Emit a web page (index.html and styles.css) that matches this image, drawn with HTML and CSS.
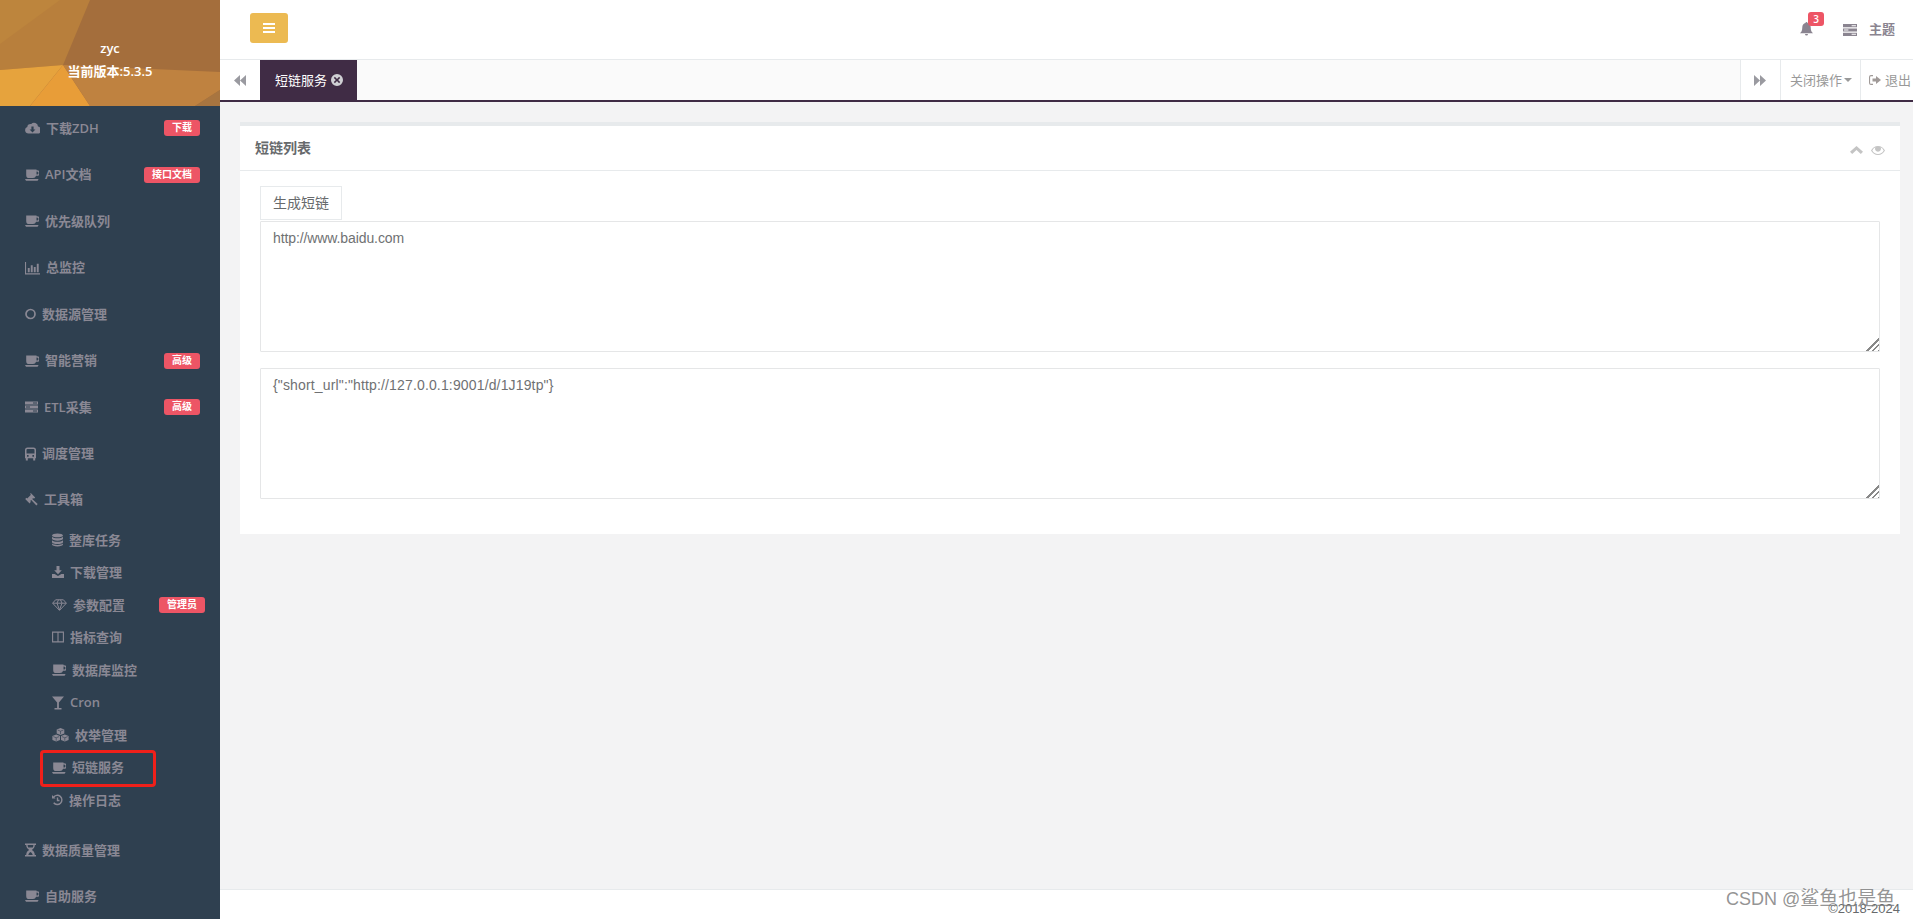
FILE: index.html
```html
<!DOCTYPE html>
<html lang="zh-CN">
<head>
<meta charset="UTF-8">
<meta name="viewport" content="width=device-width, initial-scale=1.0">
<title>短链服务</title>
<link rel="stylesheet" href="styles.css">
</head>
<body>
<svg class="sprite" xmlns="http://www.w3.org/2000/svg">
  <symbol id="i-cloud" viewBox="0 0 15 12"><path fill-rule="evenodd" d="M3.4 11.5A3.3 3.3 0 0 1 2.3 5.1 3.2 3.2 0 0 1 6.2 2 4 4 0 0 1 13 4.6a3.5 3.5 0 0 1-1.2 6.9zM6.4 4.5v3H4.6l2.9 3 2.9-3H8.6v-3z"/></symbol>
  <symbol id="i-coffee" viewBox="0 0 14 13"><path fill-rule="evenodd" d="M1.2 1h10.3v.8h.6a2.7 2.7 0 0 1 0 5.4h-1A3.3 3.3 0 0 1 8 9.6H4.4a3.2 3.2 0 0 1-3.2-3.2zM11.5 3v3h.5a1.5 1.5 0 0 0 0-3zM0 10.6h13.6l-1 1.6H1z"/></symbol>
  <symbol id="i-chart" viewBox="0 0 14 12"><path d="M0 .5h1v10.3h13V12H0zM2.6 6h1.8v4H2.600zM5.400 3.400h1.800v6.600H5.400zM8.200 5h1.800v5H8.200zM11 2h1.800v8H11z"/></symbol>
  <symbol id="i-ring" viewBox="0 0 11 11"><circle cx="5.500" cy="5.500" r="4.500" fill="none" stroke="currentColor" stroke-width="1.700"/></symbol>
  <symbol id="i-server" viewBox="0 0 13 11"><path fill-rule="evenodd" d="M0 0h13v3H0zM8 1v1h4V1zM0 4h13v3H0zM1 5v1h4V5zM0 8h13v3H0zM8 9v1h4V9z"/></symbol>
  <symbol id="i-bus" viewBox="0 0 11 13"><path fill-rule="evenodd" d="M2.500 0h6A2.500 2.500 0 0 1 11 2.500v8.300h-.8V13H8.200v-2.200H2.800V13H.8v-2.200H0V2.500A2.500 2.500 0 0 1 2.500 0zM1.500 2.500v3.400h8V2.500a1 1 0 0 0-1-1h-6a1 1 0 0 0-1 1zM2 7.400v1.800h1.600V7.400zM7.400 7.400v1.800H9V7.400z"/></symbol>
  <symbol id="i-gavel" viewBox="0 0 13 13"><path d="M5.800.6l4.400 4.400-1.300 1.300-.7-.7-1 1 5.500 5-1.300 1.300-5.200-5.400-1 1 .7.700L4.600 11 .2 6.600l1.300-1.300.7.7L6 2.200 5.100 1.400z"/></symbol>
  <symbol id="i-db" viewBox="0 0 11 13"><path d="M5.500 0C8.500 0 11 .8 11 1.900S8.500 3.800 5.500 3.800 0 3 0 1.900 2.500 0 5.500 0zM0 3.300c1 1 3.200 1.500 5.500 1.500s4.500-.5 5.500-1.500v2c0 1-2.500 1.900-5.500 1.900S0 6.300 0 5.300zM0 6.700c1 1 3.200 1.500 5.500 1.500s4.500-.5 5.500-1.500v2c0 1-2.500 1.900-5.500 1.900S0 9.700 0 8.700zM0 10.100c1 1 3.200 1.400 5.500 1.400s4.500-.4 5.500-1.400v1C11 12.200 8.500 13 5.500 13S0 12.200 0 11.100z"/></symbol>
  <symbol id="i-down" viewBox="0 0 12 12"><path d="M4.500 0h3v4.300h2.300L6 8.300 2.200 4.300h2.300zM0 8h2.600L6 10l3.400-2H12v4H0z"/></symbol>
  <symbol id="i-gem" viewBox="0 0 15 12"><path fill="none" stroke="currentColor" d="M3.600.8h7.800l3 3.400-6.900 7.200L.6 4.200zM.8 4.200h13.400M5 4.200L7.500 11l2.500-6.800M5 4.200L6.500.8M10 4.200L8.500.8"/></symbol>
  <symbol id="i-cols" viewBox="0 0 12 11"><path fill="none" stroke="currentColor" stroke-width="1.100" d="M.6.6h10.800v9.800H.6zM6 .6v9.800"/></symbol>
  <symbol id="i-glass" viewBox="0 0 12 13"><path d="M0 0h12L6.900 6v5.500h2.600V13H2.500v-1.500h2.600V6z"/></symbol>
  <symbol id="i-cubes" viewBox="0 0 17 14"><path d="M8.500 0l3.800 1.500v4L8.500 7 4.700 5.500v-4zM4.200 6.600L8 8.100v4l-3.800 1.500L.400 12.100v-4zM12.800 6.600l3.800 1.500v4l-3.800 1.500L9 12.100v-4z"/><path fill="none" stroke="#2f4050" stroke-width=".6" d="M5.600 2l2.900 1.200L11.400 2M8.500 3.200v3M1.300 8.600l2.900 1.200 2.900-1.200M4.200 9.800v3M9.900 8.600l2.900 1.200 2.900-1.200M12.800 9.800v3"/></symbol>
  <symbol id="i-hist" viewBox="0 0 11 11"><path fill="none" stroke="currentColor" stroke-width="1.400" d="M1.500 2.800A4.600 4.600 0 1 1 1.700 8.300M5.500 3v3h2"/><path d="M0 .5l3.600 3.600H0z"/></symbol>
  <symbol id="i-sand" viewBox="0 0 11 13"><path d="M0 0h11v1.600H9.800c0 2.500-1.400 4-3 4.900 1.600.9 3 2.400 3 4.900H11V13H0v-1.600h1.200c0-2.500 1.400-4 3-4.900-1.600-.9-3-2.400-3-4.900H0zM2.600 1.600c0 1 .2 1.800.6 2.500h4.600c.4-.7.600-1.500.6-2.500zM3.300 11.400h4.400c-.3-1.500-1.100-2.400-2.200-3-1.100.6-1.900 1.500-2.200 3z"/></symbol>
  <symbol id="i-bell" viewBox="0 0 13 14"><path d="M6.500 0a1 1 0 0 1 1 1.100c2 .4 3.200 2 3.200 4.100 0 3.600 1 4.800 2.300 6H0c1.300-1.200 2.300-2.400 2.300-6 0-2.100 1.200-3.700 3.200-4.100a1 1 0 0 1 1-1.100zM5 12h3a1.500 1.500 0 0 1-3 0z"/></symbol>
  <symbol id="i-back" viewBox="0 0 12 11"><path d="M6 0v11L0 5.500zM12 0v11L6 5.500z"/></symbol>
  <symbol id="i-fwd" viewBox="0 0 12 11"><path d="M0 0v11l6-5.500zM6 0v11l6-5.500z"/></symbol>
  <symbol id="i-x" viewBox="0 0 12 12"><path fill-rule="evenodd" d="M6 0a6 6 0 1 1 0 12A6 6 0 0 1 6 0zM3.900 2.800L2.800 3.900 4.900 6 2.800 8.100l1.100 1.100L6 7.100l2.100 2.100 1.100-1.100L7.100 6l2.100-2.100-1.100-1.100L6 4.900z"/></symbol>
  <symbol id="i-out" viewBox="0 0 12 10"><path d="M4 0v1.200H2a.9.9 0 0 0-.9.9v5.800c0 .5.400.9.900.9h2V10H2a2 2 0 0 1-2-2V2a2 2 0 0 1 2-2z"/><path d="M7 1l5 4-5 4V6.500H3.500v-3H7z"/></symbol>
  <symbol id="i-up" viewBox="0 0 13 8"><path d="M6.500 0L13 5.800 10.800 8 6.500 4 2.200 8 0 5.800z"/></symbol>
  <symbol id="i-eye" viewBox="0 0 14 9"><path fill-rule="evenodd" d="M7 0c3 0 5.600 1.800 7 4.500C12.600 7.200 10 9 7 9S1.400 7.200 0 4.500C1.400 1.800 4 0 7 0zM4.400 1.300A6.800 6.800 0 0 0 1.300 4.500 6.300 6.300 0 0 0 7 7.900a6.300 6.300 0 0 0 5.700-3.400 6.800 6.800 0 0 0-3.100-3.200 3 3 0 1 1-5.200 0z"/></symbol>
</svg>

<div class="wrapper">
  <nav class="sidebar">
    <div class="profile">
      <svg class="profile-bg" viewBox="0 0 220 106" preserveAspectRatio="none">
        <rect width="220" height="106" fill="#a46e3c"/>
        <polygon points="0,0 90,0 63,65 0,70" fill="#b87f3c"/>
        <polygon points="0,0 60,0 0,44" fill="#bd853d"/>
        <polygon points="0,70 63,65 30,106 0,106" fill="#e6a33d"/>
        <polygon points="63,65 90,106 30,106" fill="#e89d38"/>
        <polygon points="63,65 220,72 220,90 195,106 90,106" fill="#bf8240"/>
        <polygon points="195,106 220,90 220,106" fill="#a87540"/>
      </svg>
      <strong class="profile-name">zyc</strong>
      <strong class="profile-ver">当前版本:5.3.5</strong>
    </div>
    <ul class="menu">
      <li><a><svg class="ic w15"><use href="#i-cloud"/></svg>下载ZDH<span class="tag">下载</span></a></li>
      <li><a><svg class="ic w14"><use href="#i-coffee"/></svg>API文档<span class="tag">接口文档</span></a></li>
      <li><a><svg class="ic w14"><use href="#i-coffee"/></svg>优先级队列</a></li>
      <li><a><svg class="ic w15"><use href="#i-chart"/></svg>总监控</a></li>
      <li><a><svg class="ic w11"><use href="#i-ring"/></svg>数据源管理</a></li>
      <li><a><svg class="ic w14"><use href="#i-coffee"/></svg>智能营销<span class="tag">高级</span></a></li>
      <li><a><svg class="ic w13"><use href="#i-server"/></svg>ETL采集<span class="tag">高级</span></a></li>
      <li><a><svg class="ic w11"><use href="#i-bus"/></svg>调度管理</a></li>
      <li>
        <a class="menu-tools"><svg class="ic w13"><use href="#i-gavel"/></svg>工具箱</a>
        <ul class="submenu">
          <li><a><svg class="ic w11"><use href="#i-db"/></svg>整库任务</a></li>
          <li><a><svg class="ic w12"><use href="#i-down"/></svg>下载管理</a></li>
          <li><a><svg class="ic w15"><use href="#i-gem"/></svg>参数配置<span class="tag">管理员</span></a></li>
          <li><a><svg class="ic w12"><use href="#i-cols"/></svg>指标查询</a></li>
          <li><a><svg class="ic w14"><use href="#i-coffee"/></svg>数据库监控</a></li>
          <li><a><svg class="ic w12"><use href="#i-glass"/></svg>Cron</a></li>
          <li><a><svg class="ic w17"><use href="#i-cubes"/></svg>枚举管理</a></li>
          <li><a><svg class="ic w14"><use href="#i-coffee"/></svg>短链服务</a><span class="mark"></span></li>
          <li><a><svg class="ic w11"><use href="#i-hist"/></svg>操作日志</a></li>
        </ul>
      </li>
      <li><a><svg class="ic w11"><use href="#i-sand"/></svg>数据质量管理</a></li>
      <li><a><svg class="ic w14"><use href="#i-coffee"/></svg>自助服务</a></li>
    </ul>
  </nav>

  <div class="main">
    <header class="topbar">
      <button class="menu-btn"><span></span><span></span><span></span></button>
      <div class="top-right">
        <a class="bell"><svg class="ic-bell"><use href="#i-bell"/></svg><span class="bell-count">3</span></a>
        <a class="theme"><svg class="ic w14 theme-ic"><use href="#i-server"/></svg>主题</a>
      </div>
    </header>

    <div class="tabs">
      <button class="tab-arrow"><svg class="ic-arrow"><use href="#i-back"/></svg></button>
      <a class="tab-active">短链服务<svg class="ic-close"><use href="#i-x"/></svg></a>
      <div class="tab-tools">
        <button class="tab-arrow tool-next"><svg class="ic-arrow"><use href="#i-fwd"/></svg></button>
        <a class="tool-close">关闭操作<span class="caret"></span></a>
        <a class="tool-exit"><svg class="ic-out"><use href="#i-out"/></svg>退出</a>
      </div>
    </div>

    <main class="content">
      <section class="box">
        <div class="box-title">
          <h5>短链列表</h5>
          <div class="box-tools">
            <svg class="ic-up"><use href="#i-up"/></svg>
            <svg class="ic-eye"><use href="#i-eye"/></svg>
          </div>
        </div>
        <div class="box-body">
          <button class="gen-btn">生成短链</button>
          <textarea class="field">http://www.baidu.com</textarea>
          <textarea class="field field-result">{"short_url":"http://127.0.0.1:9001/d/1J19tp"}</textarea>
        </div>
      </section>
    </main>

    <footer class="footer">©2018-2024</footer>
  </div>
</div>
<div class="watermark">CSDN @<span class="watermark-name">鲨鱼也是鱼</span></div>
</body>
</html>
```

FILE: styles.css
```css
* {
  box-sizing: border-box;
}
html, body {
  height: 100%;
}
body {
  margin: 0;
  overflow: hidden;
  font-family: "Open Sans", "Noto Sans CJK SC", sans-serif;
  font-size: 13px;
  line-height: 18.57px;
  color: #676a6c;
  background-color: #f3f3f4;
}
ul {
  list-style: none;
  margin: 0;
  padding: 0;
}
button {
  font-family: inherit;
  border: none;
  padding: 0;
}
.sprite {
  display: none;
}
.wrapper {
  display: flex;
  height: 100vh;
}

/* sidebar */
.sidebar {
  width: 220px;
  flex-shrink: 0;
  height: 100vh;
  overflow: hidden;
  background-color: #2f4050;
}
.profile {
  position: relative;
  height: 106px;
  display: flex;
  flex-direction: column;
  align-items: center;
  padding-top: 39px;
  color: #fff;
}
.profile-bg {
  position: absolute;
  left: 0;
  top: 0;
  width: 100%;
  height: 100%;
}
.profile strong {
  position: relative;
  font-weight: 600;
}
.profile-ver {
  margin-top: 4px;
}
.menu > li > a {
  display: flex;
  align-items: center;
  height: 46.5px;
  padding: 0 20px 2px 25px;
  font-weight: 600;
  color: #8a8894;
}
.menu > li > a.menu-tools {
  padding-bottom: 4px;
}
.submenu {
  padding-bottom: 10px;
}
.submenu li {
  position: relative;
}
.submenu a {
  display: flex;
  align-items: center;
  height: 32.57px;
  padding: 0 15px 2px 52px;
  font-weight: 600;
  color: #8a8894;
}
.ic {
  height: 14px;
  flex-shrink: 0;
  margin-right: 6px;
  fill: currentColor;
}
.w11 { width: 11px; }
.w12 { width: 12px; }
.w13 { width: 13px; }
.w14 { width: 14px; }
.w15 { width: 15px; }
.w17 { width: 17px; }
.tag {
  margin-left: auto;
  height: 16px;
  padding: 0 8px;
  border-radius: 3px;
  background-color: #ed5565;
  color: #fff;
  font-size: 10px;
  font-weight: 600;
  line-height: 15px;
}
.mark {
  position: absolute;
  left: 40px;
  top: -2px;
  width: 116px;
  height: 37px;
  border: 3px solid #f0201a;
  border-radius: 4px;
}

/* top bar */
.main {
  flex: 1;
  min-width: 0;
  display: flex;
  flex-direction: column;
}
.topbar {
  height: 60px;
  flex-shrink: 0;
  display: flex;
  align-items: center;
  justify-content: space-between;
  padding: 0 18px 0 30px;
  background-color: #fff;
  border-bottom: 1px solid #e7eaec;
}
.menu-btn {
  width: 38px;
  height: 30px;
  margin-top: -3px;
  display: flex;
  flex-direction: column;
  align-items: center;
  justify-content: center;
  gap: 2px;
  border-radius: 3px;
  background-color: #ecba52;
}
.menu-btn span {
  width: 12px;
  height: 2px;
  background-color: #fff;
}
.top-right {
  display: flex;
  align-items: center;
  color: #8a8490;
  font-weight: 600;
}
.bell {
  position: relative;
  display: flex;
  margin-right: 30px;
  margin-top: -1px;
}
.ic-bell {
  width: 13px;
  height: 14px;
  fill: #8a8490;
}
.bell-count {
  position: absolute;
  left: 8px;
  top: -10px;
  width: 16px;
  height: 14px;
  border-radius: 3px;
  background-color: #ed5565;
  color: #fff;
  font-size: 10px;
  line-height: 14px;
  text-align: center;
}
.theme {
  display: flex;
  align-items: center;
}
.theme-ic {
  margin-right: 12px;
}

/* tab strip */
.tabs {
  height: 42px;
  flex-shrink: 0;
  display: flex;
  background-color: #fafafa;
  border-bottom: 2px solid #3f2b45;
}
.tab-arrow {
  width: 40px;
  display: flex;
  align-items: center;
  justify-content: center;
  background-color: #fff;
}
.ic-arrow {
  width: 12px;
  height: 11px;
  fill: #9a9aa0;
}
.tab-active {
  width: 97px;
  display: flex;
  align-items: center;
  padding-left: 15px;
  background-color: #402c45;
  color: #fff;
}
.ic-close {
  width: 12px;
  height: 12px;
  margin-left: 4px;
  fill: #d0d0d4;
}
.tab-tools {
  margin-left: auto;
  display: flex;
}
.tool-next {
  width: 40px;
  padding-right: 1px;
  border-left: 1px solid #e7eaec;
}
.tool-close {
  width: 80px;
  display: flex;
  align-items: center;
  padding-left: 9px;
  background-color: #fff;
  border-left: 1px solid #e7eaec;
  color: #999;
}
.caret {
  margin-left: 2px;
  border-top: 4px solid #999;
  border-left: 4px solid transparent;
  border-right: 4px solid transparent;
}
.tool-exit {
  width: 53px;
  display: flex;
  align-items: center;
  padding-left: 8px;
  background-color: #fff;
  border-left: 1px solid #e7eaec;
  color: #999;
  white-space: nowrap;
}
.ic-out {
  width: 12px;
  height: 10px;
  margin-right: 4px;
  fill: #a09a98;
}

/* content */
.content {
  flex: 1;
  min-height: 0;
  padding: 20px 13px 0 20px;
}
.box {
  background-color: #fff;
  border-top: 4px solid #e7eaec;
}
.box-title {
  height: 45px;
  display: flex;
  align-items: center;
  justify-content: space-between;
  padding: 0 15px;
  border-bottom: 1px solid #e7eaec;
}
.box-title h5 {
  margin: 0;
  font-size: 14px;
  font-weight: 600;
  color: #676a6c;
}
.box-tools {
  display: flex;
  align-items: center;
  gap: 8px;
  margin-top: 4px;
}
.ic-up {
  width: 13px;
  height: 8px;
  fill: #c4c4c4;
}
.ic-eye {
  width: 14px;
  height: 9px;
  fill: #c4c4c4;
}
.box-body {
  display: flex;
  flex-direction: column;
  align-items: flex-start;
  padding: 15px 20px 35px;
}
.gen-btn {
  width: 82px;
  height: 34px;
  margin-bottom: 1px;
  padding-bottom: 2px;
  background-color: #fff;
  border: 1px solid #e7eaec;
  color: #676a6c;
  font-size: 14px;
}
.field {
  display: block;
  width: 100%;
  height: 131px;
  padding: 6px 12px;
  background-color: #fff;
  border: 1px solid #e5e6e7;
  border-radius: 1px;
  color: #6f7173;
  font-family: "Liberation Sans", Arial, sans-serif;
  font-size: 14px;
  letter-spacing: -0.1px;
  line-height: 20px;
  outline: none;
}
.field::-webkit-resizer {
  background-image: linear-gradient(135deg, #fff 50%, transparent 50%), repeating-linear-gradient(135deg, #888 0, #888 1.5px, #fff 1.5px, #fff 4px);
}
.field-result {
  margin-top: 16px;
  letter-spacing: 0.15px;
}

/* footer */
.footer {
  height: 30px;
  flex-shrink: 0;
  padding: 10px 13px 0 0;
  font-family: "Liberation Sans", Arial, sans-serif;
  text-align: right;
  background-color: #fff;
  border-top: 1px solid #e7eaec;
  overflow: hidden;
}
.watermark {
  position: absolute;
  left: 1726px;
  top: 888px;
  font-family: "Liberation Sans", "Noto Sans CJK SC", sans-serif;
  font-size: 18px;
  line-height: 22px;
  color: rgba(120, 120, 120, 0.8);
  white-space: nowrap;
}
.watermark-name {
  font-size: 19px;
}
```
